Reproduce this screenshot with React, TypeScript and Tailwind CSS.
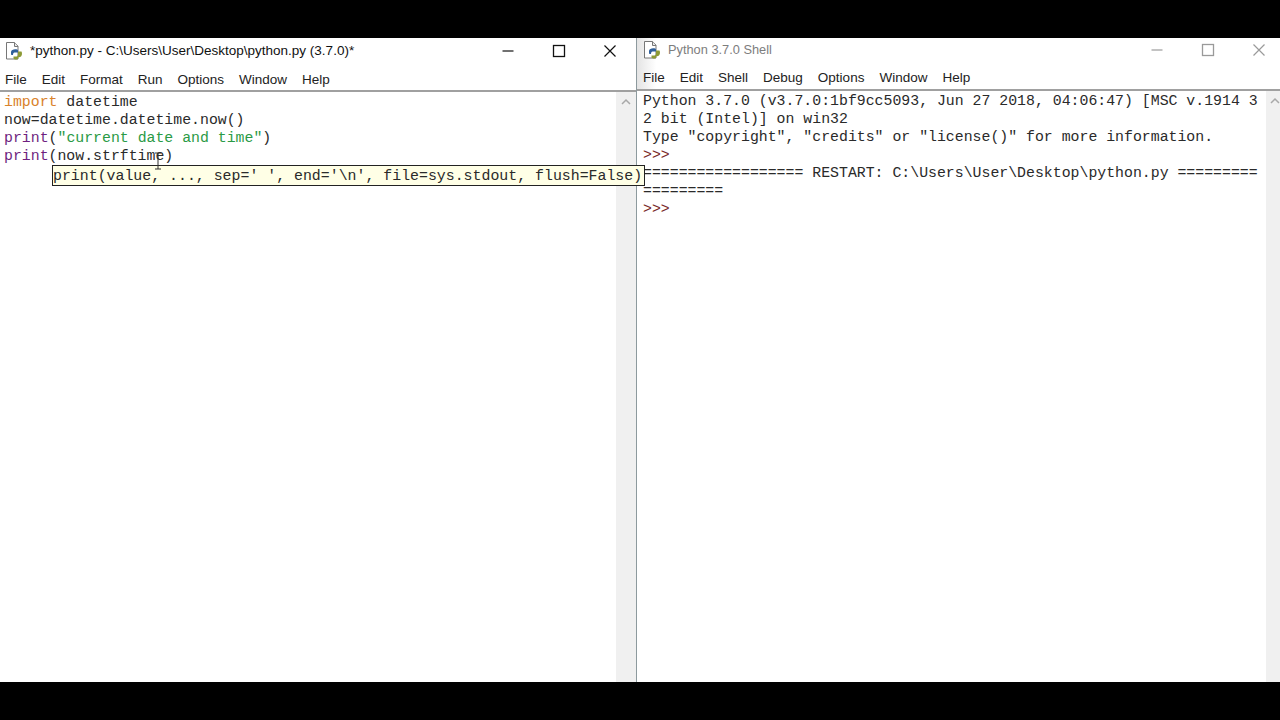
const mono = "font-['Liberation_Mono','Courier_New',monospace] leading-[18px] text-[#2a2a2a] whitespace-pre"

function FileIcon() {
  return (
    <svg width="20" height="20" viewBox="0 0 20 20" className="shrink-0">
      <path d="M2.500 1.500h8l3.500 3.500v13h-11.500z" fill="#fff" stroke="#777" />
      <path d="M10.500 1.500v4h3.500" fill="#e8e8e8" stroke="#777" />
      <path d="M7 11c0-3.500 7-3.500 7-1.500v2h-3.500c-1 0-1.500 1-1.500 2.500H7.500c-.5 0-.5-2-.5-3z" fill="#2f5f9a" />
      <path d="M17.500 10.500c1 2 .5 5-1.500 5.500l-2 .5v1.500c-2 1-4.500 .5-4.500-1v-1.500h3c1.500 0 1.500-1.500 1.500-2.500v-2.500z" fill="#8c9a35" />
    </svg>
  )
}

function WinButtons({ faded }: { faded?: boolean }) {
  const c = faded ? '#9a9a9a' : '#111'
  return (
    <div className="flex items-center">
      <svg width="14" height="14" viewBox="0 0 14 14" className="mr-[37px]">
        <path d="M1.500 7h11" stroke={c} strokeWidth="1.200" />
      </svg>
      <svg width="14" height="14" viewBox="0 0 14 14" className="mr-[37px]">
        <rect x="1.500" y="1.500" width="11" height="11" fill="none" stroke={c} strokeWidth="1.300" />
      </svg>
      <svg width="14" height="14" viewBox="0 0 14 14">
        <path d="M1.500 1.500l11 11M12.500 1.500l-11 11" stroke={c} strokeWidth="1.200" />
      </svg>
    </div>
  )
}

function Menu({ items }: { items: string[] }) {
  return (
    <div className="flex gap-[15px] text-[13.5px] leading-[20px] text-[#222]">
      {items.map((m) => (
        <span key={m}>{m}</span>
      ))}
    </div>
  )
}

function Scrollbar({ width }: { width: string }) {
  return (
    <div className={`${width} shrink-0 bg-[#f0f0f0] pt-[6px]`}>
      <svg width="12" height="8" viewBox="0 0 12 8">
        <path d="M2 6l4-4 4 4" fill="none" stroke="#a8a8a8" strokeWidth="1.500" />
      </svg>
    </div>
  )
}

export default function App() {
  return (
    <div className="relative flex flex-col w-[1280px] h-[720px] bg-black overflow-hidden font-['Liberation_Sans',Arial,sans-serif]">
      <div className="h-[38px] shrink-0" />
      <div className="flex h-[644px] bg-white">
        {/* editor window */}
        <div className="w-[637px] flex flex-col shrink-0 border-r border-[#8d9a9e]">
          <div className="h-[26px] flex items-center pl-[4px] pr-[19px] shrink-0">
            <FileIcon />
            <span className="ml-[6px] text-[13.5px] text-[#111] flex-1">*python.py - C:\Users\User\Desktop\python.py (3.7.0)*</span>
            <WinButtons />
          </div>
          <div className="h-[28px] pt-[6px] pl-[5px] shrink-0 border-b-2 border-[#a0a0a0]">
            <Menu items={['File', 'Edit', 'Format', 'Run', 'Options', 'Window', 'Help']} />
          </div>
          <div className="flex flex-1">
            <div className={`flex-1 pl-[4px] pt-[1px] text-[14.85px] ${mono}`}>
              <div>
                <span className="text-[#d9822b]">import</span> datetime
              </div>
              <div>now=datetime.datetime.now()</div>
              <div>
                <span className="text-[#6f1f80]">print</span>(<span className="text-[#2a9a45]">"current date and time"</span>)
              </div>
              <div>
                <span className="text-[#6f1f80]">print</span>(now.strftime)
              </div>
            </div>
            <Scrollbar width="w-[20px] pl-[4px]" />
          </div>
        </div>

        {/* shell window */}
        <div className="flex-1 flex flex-col min-w-0 bg-gradient-to-r from-[#e4e4e4] to-white to-[3%]">
          <div className="h-[23px] flex items-center pl-[5px] pr-[14px] shrink-0">
            <FileIcon />
            <span className="ml-[6px] text-[12.8px] text-[#7d7d7d] flex-1">Python 3.7.0 Shell</span>
            <WinButtons faded />
          </div>
          <div className="h-[30px] pt-[7px] pl-[6px] shrink-0 border-b-2 border-[#a0a0a0]">
            <Menu items={['File', 'Edit', 'Shell', 'Debug', 'Options', 'Window', 'Help']} />
          </div>
          <div className="flex flex-1">
            <div className={`flex-1 pl-[6px] pt-[1px] bg-white overflow-hidden text-[14.85px] ${mono}`}>
              <div>Python 3.7.0 (v3.7.0:1bf9cc5093, Jun 27 2018, 04:06:47) [MSC v.1914 3</div>
              <div>2 bit (Intel)] on win32</div>
              <div>Type "copyright", "credits" or "license()" for more information.</div>
              <div className="text-[#7a2a2a]">&gt;&gt;&gt;</div>
              <div>================== RESTART: C:\Users\User\Desktop\python.py =========</div>
              <div>=========</div>
              <div className="text-[#7a2a2a]">&gt;&gt;&gt;</div>
            </div>
            <Scrollbar width="w-[14px] pl-[3px]" />
          </div>
        </div>
      </div>
      <div className="h-[38px] shrink-0" />

      {/* calltip */}
      <div className={`absolute left-[52px] top-[165px] w-[593px] h-[21px] pt-[1px] bg-[#ffffe6] border border-[#222] text-[14.88px] ${mono}`}>
        print(value, ..., sep=' ', end='\n', file=sys.stdout, flush=False)
      </div>
      {/* i-beam cursor */}
      <svg width="10" height="18" viewBox="0 0 10 18" className="absolute left-[153px] top-[152px]">
        <path d="M2 1h6M5 1v16M2 17h6" stroke="#333" strokeWidth="1" fill="none" />
      </svg>
    </div>
  )
}
